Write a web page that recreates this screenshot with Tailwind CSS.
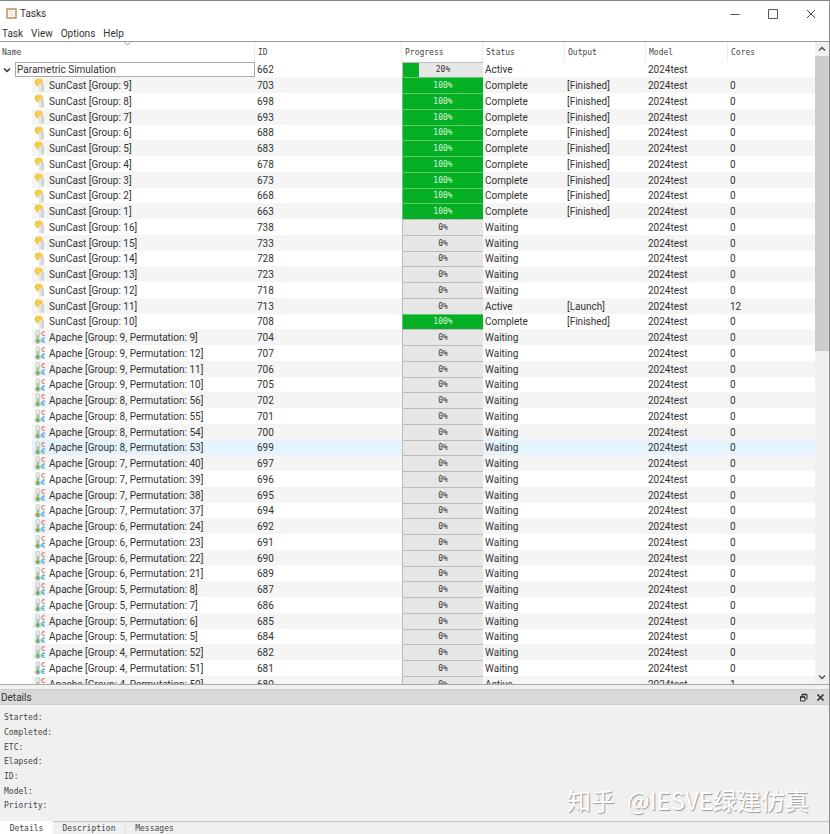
<!DOCTYPE html>
<html lang="en">
<head>
<meta charset="utf-8">
<title>Tasks</title>
<script src="https://cdn.jsdelivr.net/npm/@tailwindcss/browser@4"></script>
</head>
<body class="relative flex h-screen flex-col overflow-hidden border-t border-r border-t-[#7f8791] border-r-[#8a8a8a] bg-white font-[Roboto,'Noto_Sans',sans-serif] text-[10px] leading-[15px] text-[#333]">
<svg class="hidden" aria-hidden="true">
  <symbol id="sun" viewBox="0 0 12 14">
    <circle cx="5" cy="4.500" r="4" fill="#f8cc45"/>
    <path d="M1.200 5a4 4 0 0 1 2-4" fill="none" stroke="#f2b52a" stroke-width="1"/>
    <path d="M5 6 7 4.500 10 5.500V13.500H5z" fill="#cfd3d6"/>
    <path d="M5 6 7.500 5.500V13.500H5z" fill="#e3e5e7"/>
  </symbol>
  <symbol id="thermo" viewBox="0 0 12 14">
    <path d="M2 2a1.7 1.7 0 0 1 3.600 0v6.500a3 3 0 1 1-3.600 0z" fill="#e4ece6" stroke="#b3c2bc" stroke-width=".7"/>
    <path d="M3.800 5v6" stroke="#86b173" stroke-width="1.200"/>
    <circle cx="3.800" cy="11" r="2" fill="#7ba76b"/>
    <path d="M10.800 2.200A1.900 1.900 0 1 0 10.800 5" fill="none" stroke="#e98578" stroke-width="1.200"/>
    <path d="M11 8.400A2.100 2.100 0 1 0 11 12M7.200 10.400h3.200" fill="none" stroke="#5bb5e6" stroke-width="1.400"/>
  </symbol>
</svg>

<header class="flex h-[25px] shrink-0 items-center justify-between pl-[6px]">
  <div class="flex items-center gap-[3px]">
    <svg class="size-[11px]" viewBox="0 0 11 11"><rect x="1" y="1" width="9" height="9" fill="#fbf8f3" stroke="#b98c52" stroke-width="1.4"/><path d="M3.5 3.5h4M3.5 5.5h4M3.5 7.5h4" stroke="#ddd6cc" stroke-width=".7"/></svg>
    <h1>Tasks</h1>
  </div>
  <div class="flex items-center pr-[13px]">
    <button aria-label="Minimize" class="w-[38px]"><svg class="mx-auto size-[10px]" viewBox="0 0 10 10"><path d="M.5 5.5h9" stroke="#555"/></svg></button>
    <button aria-label="Maximize" class="w-[38px]"><svg class="mx-auto size-[10px]" viewBox="0 0 10 10"><path d="M.5.5h9v9h-9z" fill="none" stroke="#555"/></svg></button>
    <button aria-label="Close" class="flex w-[24px] justify-end"><svg class="size-[10px]" viewBox="0 0 10 10"><path d="m1 1 8 8M9 1 1 9" stroke="#444"/></svg></button>
  </div>
</header>

<nav class="flex h-[16px] shrink-0 items-center gap-[8px] border-b border-[#9a9a9a] pl-[2px]">
  <button>Task</button><button>View</button><button>Options</button><button>Help</button>
</nav>

<main class="flex min-h-0 flex-1 border-b border-[#a8a8a8]">
  <div class="relative min-w-0 flex-1 overflow-hidden">
    <svg class="absolute top-0 left-[124px] h-[4px] w-[7px]" viewBox="0 0 7 4"><path d="m.5.5 3 2.5 3-2.5" fill="none" stroke="#999"/></svg>
    <table class="w-full table-fixed border-separate border-spacing-0 text-left whitespace-nowrap">
      <colgroup><col class="w-[255px]"><col class="w-[147px]"><col class="w-[81px]"><col class="w-[82px]"><col class="w-[81px]"><col class="w-[82px]"><col></colgroup>
      <thead class="font-['DejaVu_Sans_Mono',monospace] text-[8px] text-[#444] [&_th]:h-[20px] [&_th]:border-r [&_th]:border-[#ececec] [&_th]:p-0 [&_th]:pl-[3px] [&_th]:font-normal">
        <tr><th scope="col" class="pl-[2px]!">Name</th><th scope="col">ID</th><th scope="col">Progress</th><th scope="col">Status</th><th scope="col">Output</th><th scope="col">Model</th><th scope="col" class="border-r-0!">Cores</th></tr>
      </thead>
      <tbody id="rows" class="[&_td]:p-0 [&>tr]:h-[16px] [&>tr:nth-child(4n+1)]:h-[15px]"></tbody>
    </table>
  </div>
  <div class="flex w-[14px] shrink-0 flex-col bg-[#f0f0f0]" role="scrollbar" aria-label="Task list" aria-controls="rows" aria-valuenow="0">
    <button aria-label="Scroll up" class="flex h-[14px] shrink-0 items-center justify-center"><svg class="size-[8px]" viewBox="0 0 8 8"><path d="m1 5.5 3-3 3 3" fill="none" stroke="#555" stroke-width="1.5"/></svg></button>
    <div class="min-h-0 flex-1"><div class="h-[48%] bg-[#cdcdcd]"></div></div>
    <button aria-label="Scroll down" class="flex h-[14px] shrink-0 items-center justify-center"><svg class="size-[8px]" viewBox="0 0 8 8"><path d="m1 2.5 3 3 3-3" fill="none" stroke="#555" stroke-width="1.5"/></svg></button>
  </div>
</main>

<section class="shrink-0 bg-[#f0f0f0] pt-[4px]" aria-labelledby="details-title">
  <div class="flex h-[16px] items-center justify-between border-y border-y-[#cfcfcf] bg-[#d9d9d9] pr-[4px] pl-[1px]">
    <h2 id="details-title">Details</h2>
    <div class="flex gap-[8px]">
      <button aria-label="Float panel"><svg class="size-[9px]" viewBox="0 0 9 9"><path d="M3 3V1.5h5V6H6.5" fill="none" stroke="#333"/><path d="M3 1.5h5M1 4h5" stroke="#333" stroke-width="1.6"/><path d="M1.500 4h4.500v4h-4.500z" fill="none" stroke="#333"/></svg></button>
      <button aria-label="Close panel"><svg class="size-[9px]" viewBox="0 0 9 9"><path d="m1.500 1.500 6 6M7.500 1.500l-6 6" stroke="#333" stroke-width="1.700"/></svg></button>
    </div>
  </div>
  <dl class="h-[116px] pt-[5px] pl-[4px] font-['DejaVu_Sans_Mono',monospace] text-[8px] text-[#444] [&>dt]:h-[15px] [&>dt:nth-child(3n)]:h-[14px]">
    <dt>Started:</dt><dt>Completed:</dt><dt>ETC:</dt><dt>Elapsed:</dt><dt>ID:</dt><dt>Model:</dt><dt>Priority:</dt>
  </dl>
  <div role="tablist" class="flex h-[13px] font-['DejaVu_Sans_Mono',monospace] text-[8px] leading-[13px] text-[#444]">
    <button role="tab" aria-selected="true" class="w-[53px] bg-white pt-px">Details</button>
    <button role="tab" aria-selected="false" class="w-[73px] border-t border-r border-t-[#c4c4c4] border-r-[#e0e0e0]">Description</button>
    <button role="tab" aria-selected="false" class="w-[57px] border-t border-[#c4c4c4]">Messages</button>
    <div class="flex-1 border-t border-[#c4c4c4]"></div>
  </div>
</section>

<div class="absolute right-[20px] bottom-[17px] flex gap-[12px] font-['Noto_Sans_CJK_SC',sans-serif] text-[24px] leading-[34px] whitespace-nowrap text-white [text-shadow:1px_1px_1px_#999]"><span>知乎</span><span>@IESVE绿建仿真</span></div>

<script>
const suncast = [[9,703],[8,698],[7,693],[6,688],[5,683],[4,678],[3,673],[2,668],[1,663],[16,738],[15,733],[14,728],[13,723],[12,718],[11,713],[10,708]];
const apache = [[9,9,704],[9,12,707],[9,11,706],[9,10,705],[8,56,702],[8,55,701],[8,54,700],[8,53,699],[7,40,697],[7,39,696],[7,38,695],[7,37,694],[6,24,692],[6,23,691],[6,22,690],[6,21,689],[5,8,687],[5,7,686],[5,6,685],[5,5,684],[4,52,682],[4,51,681],[4,50,680]];
const tasks = suncast.map(([g, id]) => {
  const done = g <= 10;
  return { icon: 'sun', name: `SunCast [Group: ${g}]`, id, pct: done ? 100 : 0,
    status: done ? 'Complete' : g === 11 ? 'Active' : 'Waiting',
    output: done ? '[Finished]' : g === 11 ? '[Launch]' : '', cores: g === 11 ? 12 : 0 };
}).concat(apache.map(([g, p, id]) => ({ icon: 'thermo', name: `Apache [Group: ${g}, Permutation: ${p}]`, id, pct: 0,
  status: id === 680 ? 'Active' : 'Waiting', output: '', cores: id === 680 ? 1 : 0 })));

const bar = pct => `<div role="progressbar" aria-valuenow="${pct}" class="relative flex h-full items-end justify-center border-t border-l font-['DejaVu_Sans_Mono',monospace] text-[8px] leading-[14px] ${pct === 100 ? 'border-[#5fc873] bg-[#06b025] text-[#d8f5dc]' : 'border-[#bcbcbc] bg-[#e6e6e6] text-[#333]'}">${pct > 0 && pct < 100 ? `<div class="absolute inset-y-0 left-0 bg-[#06b025]" style="width:${pct}%"></div>` : ''}<span class="relative">${pct}%</span></div>`;

const cells = t => `<td><div class="pl-[2px]">${t.id}</div></td><td class="h-[inherit]">${bar(t.pct)}</td><td><div class="pl-[2px]">${t.status}</div></td><td><div class="pl-[2px]">${t.output}</div></td><td><div class="pl-[2px]">2024test</div></td><td><div class="pl-[2px]">${t.cores}</div></td>`;

document.getElementById('rows').innerHTML =
  `<tr><td><div class="flex h-[15px] items-center"><button aria-label="Collapse" class="w-[15px] pl-[3px]"><svg class="size-[8px]" viewBox="0 0 8 8"><path d="m1 2.500 3 3 3-3" fill="none" stroke="#333" stroke-width="1.500"/></svg></button><div class="h-full flex-1 border border-[#aaa] pl-px leading-[13px]">Parametric Simulation</div></div></td>${cells({ id: 662, pct: 20, status: 'Active', output: '', cores: '' })}</tr>` +
  tasks.map((t, i) => {
    const bg = t.id === 699 ? 'bg-[#e5f3fd]' : i % 2 ? 'bg-white' : 'bg-[#f5f5f5]';
    return `<tr class="${bg}"><td class="h-[inherit] border-l-[32px] border-white"><div class="flex items-center gap-[3px] pl-[2px]"><svg class="h-[14px] w-[12px]"><use href="#${t.icon}"/></svg><span class="leading-[15px]">${t.name}</span></div></td>${cells(t)}</tr>`;
  }).join('');
</script>
</body>
</html>
